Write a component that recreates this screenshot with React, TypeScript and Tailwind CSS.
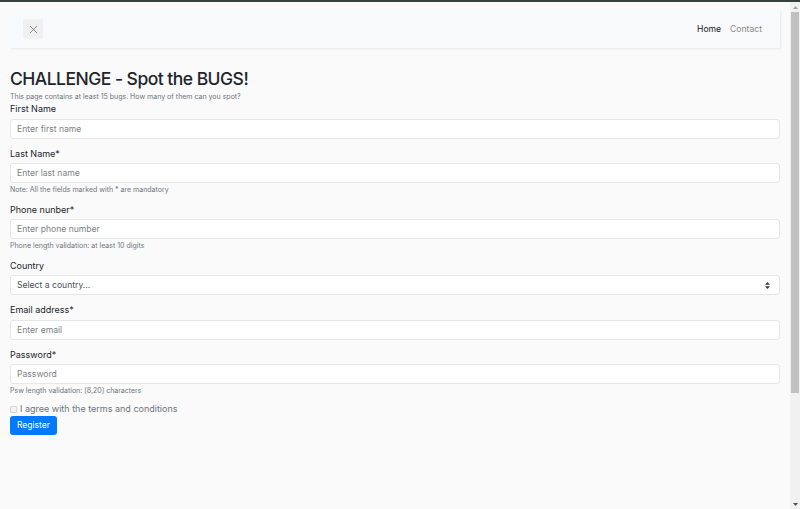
import { X } from "lucide-react";

const FONT = "font-['Inter','Noto_Sans',sans-serif]";

interface FieldProps {
  label: string;
  placeholder: string;
  type?: string;
  help?: string;
}

function Label({ children }: { children: string }) {
  return (
    <label className="mb-[2.5px] h-[15px] text-[9px] leading-[15px] text-[#212529]">
      {children}
    </label>
  );
}

function Help({ children }: { children: string }) {
  return (
    <small className="mt-[1.5px] h-[10px] text-[7px] leading-[10px] text-[#6c757d]">
      {children}
    </small>
  );
}

function Field({ label, placeholder, type = "text", help }: FieldProps) {
  return (
    <div className="mb-[7px] flex flex-col">
      <Label>{label}</Label>
      <input
        type={type}
        placeholder={placeholder}
        className="block h-[20px] w-full rounded-[3px] border border-[#e6e6e6] bg-white px-[6px] text-[8.6px] text-[#495057] outline-none placeholder:text-[#7b7f84]"
      />
      {help && <Help>{help}</Help>}
    </div>
  );
}

// browser scrollbar as seen in the capture
function Scrollbar() {
  return (
    <div className="flex w-[10px] shrink-0 flex-col bg-[#f1f1f1]">
      <div className="flex h-[10px] items-center justify-center">
        <svg width="5" height="3" viewBox="0 0 5 3">
          <path d="M2.5 0L5 3H0z" fill="#a3a3a3" />
        </svg>
      </div>
      <div className="mx-[1px] h-[381px] bg-[#c1c1c1]" />
      <div className="flex-1" />
      <div className="flex h-[10px] items-center justify-center">
        <svg width="5" height="3" viewBox="0 0 5 3">
          <path d="M0 0H5L2.5 3z" fill="#505050" />
        </svg>
      </div>
    </div>
  );
}

export default function App() {
  return (
    <div className={`${FONT} flex h-[509px] flex-col overflow-hidden bg-[#fafafa]`}>
      <div className="h-[2px] shrink-0 bg-[#35433f]" />
      <div className="flex min-h-0 flex-1">
        <div className="flex-1 px-[10px] pt-[8px]">
          <nav className="flex h-[38px] items-center justify-between bg-[#f8f9fa] pl-[13px] pr-[18px] shadow-[1px_1px_2px_rgba(0,0,0,0.08)]">
            <button className="flex h-[20px] w-[20px] items-center justify-center rounded-[2px] bg-[#f0f0f1] text-[#555]">
              <X size={13} strokeWidth={1.2} />
            </button>
            <div className="flex items-center gap-[9px] text-[8.6px]">
              <a className="text-[#1b1b1b]">Home</a>
              <a className="text-[#8a8a8a]">Contact</a>
            </div>
          </nav>

          <h1 className="mt-[19px] h-[24px] text-[17.5px] font-medium leading-[24px] tracking-[-0.03em] text-[#212529]">
            CHALLENGE - Spot the BUGS!
          </h1>
          <p className="mt-[2px] h-[8px] text-[7px] leading-[8px] text-[#6c757d]">
            This page contains at least 15 bugs. How many of them can you spot?
          </p>

          <form className="flex flex-col">
            <Field label="First Name" placeholder="Enter first name" />
            <Field
              label="Last Name*"
              placeholder="Enter last name"
              help="Note: All the fields marked with * are mandatory"
            />
            <Field
              label="Phone nunber*"
              placeholder="Enter phone number"
              help="Phone length validation: at least 10 digits"
            />

            <div className="mb-[7px] flex flex-col">
              <Label>Country</Label>
              <div className="flex h-[20px] w-full items-center justify-between rounded-[3px] border border-[#e6e6e6] bg-white pl-[6px] pr-[9px] text-[8.6px] text-[#495057]">
                <span>Select a country...</span>
                <svg width="5" height="7" viewBox="0 0 5 7">
                  <path d="M2.5 0L5 2.8H0zM2.5 7L0 4.2H5z" fill="#343a40" />
                </svg>
              </div>
            </div>

            <Field label="Email address*" placeholder="Enter email" type="email" />
            <Field
              label="Password*"
              placeholder="Password"
              type="password"
              help="Psw length validation: [8,20] characters"
            />

            <div className="flex h-[13px] items-center gap-[3px]">
              <span className="h-[7px] w-[7px] rounded-[1px] border border-[#d2d2d2] bg-[#f3f3f3]" />
              <span className="text-[9px] text-[#6c757d]">
                I agree with the terms and conditions
              </span>
            </div>
            <div className="flex">
              <button
                type="button"
                className="h-[19px] rounded-[3px] bg-[#007bff] px-[7px] text-[8.5px] text-white"
              >
                Register
              </button>
            </div>
          </form>
        </div>
        <Scrollbar />
      </div>
    </div>
  );
}
